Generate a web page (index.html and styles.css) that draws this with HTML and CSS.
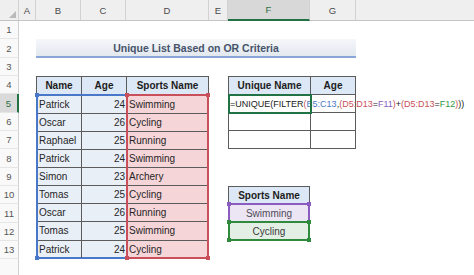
FILE: index.html
```html
<!DOCTYPE html>
<html lang="en">
<head>
    <meta charset="UTF-8">
    <meta name="viewport" content="width=device-width, initial-scale=1.0">
    <title>Unique List Based on OR Criteria</title>
    <link rel="stylesheet" href="styles.css">
</head>
<body>
    <div class="sheet">
        <!-- column headers -->
        <div class="ch corner"><span class="tri"></span></div>
        <div class="ch">A</div>
        <div class="ch">B</div>
        <div class="ch">C</div>
        <div class="ch">D</div>
        <div class="ch">E</div>
        <div class="ch sel">F</div>
        <div class="ch">G</div>
        <div class="ch rest"></div>

        <!-- title -->
        <div class="title">Unique List Based on OR Criteria</div>

        <!-- source list B4:D13 -->
        <div class="list">
            <div class="head">
                <div class="hcell">Name</div>
                <div class="hcell">Age</div>
                <div class="hcell">Sports Name</div>
            </div>
            <div class="list-body">
                <div class="range blue">
                    <i class="hd tl"></i><i class="hd bl"></i>
                    <div class="rrow"><span class="c name">Patrick</span><span class="c num">24</span></div>
                    <div class="rrow"><span class="c name">Oscar</span><span class="c num">26</span></div>
                    <div class="rrow"><span class="c name">Raphael</span><span class="c num">25</span></div>
                    <div class="rrow"><span class="c name">Patrick</span><span class="c num">24</span></div>
                    <div class="rrow"><span class="c name">Simon</span><span class="c num">23</span></div>
                    <div class="rrow"><span class="c name">Tomas</span><span class="c num">25</span></div>
                    <div class="rrow"><span class="c name">Oscar</span><span class="c num">26</span></div>
                    <div class="rrow"><span class="c name">Tomas</span><span class="c num">25</span></div>
                    <div class="rrow"><span class="c name">Patrick</span><span class="c num">24</span></div>
                </div>
                <div class="range red">
                    <i class="hd tl"></i><i class="hd tr"></i><i class="hd bl"></i><i class="hd br"></i>
                    <div class="rrow"><span class="c">Swimming</span></div>
                    <div class="rrow"><span class="c">Cycling</span></div>
                    <div class="rrow"><span class="c">Running</span></div>
                    <div class="rrow"><span class="c">Swimming</span></div>
                    <div class="rrow"><span class="c">Archery</span></div>
                    <div class="rrow"><span class="c">Cycling</span></div>
                    <div class="rrow"><span class="c">Running</span></div>
                    <div class="rrow"><span class="c">Swimming</span></div>
                    <div class="rrow"><span class="c">Cycling</span></div>
                </div>
            </div>
        </div>

        <!-- result F4:G7 -->
        <div class="result">
            <div class="rc hc">Unique Name</div>
            <div class="rc hc">Age</div>
            <div class="rc active"><span class="fx">=UNIQUE(FILTER<span class="p">(</span><span class="ref-b">B5:C13</span>,<span class="p">(</span><span class="ref-d">D5:D13</span>=<span class="ref-f11">F11</span><span class="p">)</span>+<span class="p">(</span><span class="ref-d">D5:D13</span>=<span class="ref-f12">F12</span><span class="p">)</span>))</span></div>
            <div class="rc"></div>
            <div class="rc"></div>
            <div class="rc"></div>
            <div class="rc"></div>
            <div class="rc"></div>
        </div>

        <!-- criteria F10:F12 -->
        <div class="criteria">
            <div class="crit-head">Sports Name</div>
            <div class="crit purple"><span class="ct">Swimming</span><i class="hd tl"></i><i class="hd tr"></i></div>
            <div class="crit green"><span class="ct">Cycling</span><i class="hd tl"></i><i class="hd tr"></i><i class="hd bl"></i><i class="hd br"></i></div>
        </div>

        <!-- row headers -->
        <div class="rh">1</div>
        <div class="rh">2</div>
        <div class="rh">3</div>
        <div class="rh">4</div>
        <div class="rh sel">5</div>
        <div class="rh">6</div>
        <div class="rh">7</div>
        <div class="rh">8</div>
        <div class="rh">9</div>
        <div class="rh">10</div>
        <div class="rh">11</div>
        <div class="rh">12</div>
        <div class="rh">13</div>
        <div class="rh"></div>
    </div>
</body>
</html>
```

FILE: styles.css
```css
* {
    box-sizing: border-box;
}
body {
    margin: 0;
    background: #fff;
    font-family: "Liberation Sans", Arial, sans-serif;
    font-size: 10px;
    color: #222;
}
.sheet {
    display: grid;
    grid-template-columns: 19px 17px 45px 45px 83px 19px 82px 46px 1fr;
    grid-template-rows: 21px repeat(14, 18.35px);
    width: 474px;
    height: 275px;
    overflow: hidden;
}

/* headers */
.ch {
    display: flex;
    align-items: center;
    justify-content: center;
    background: #efefef;
    border-right: 1px solid #d2d2d2;
    border-bottom: 1px solid #c4c4c4;
    color: #4a4a4a;
    font-size: 9.5px;
}
.ch.sel {
    background: #d8d8d8;
    border-bottom: 2px solid #217346;
    color: #2f6f44;
}
.ch.rest {
    border-right: none;
}
.corner {
    align-items: flex-end;
    justify-content: flex-end;
    padding: 0 2px 2px 0;
}
.tri {
    width: 0;
    height: 0;
    border-left: 7px solid transparent;
    border-bottom: 7px solid #b9b9b9;
}
.rh {
    grid-column: 1;
    display: flex;
    align-items: center;
    justify-content: center;
    background: #f9f9f9;
    border-right: 1px solid #cfcfcf;
    border-bottom: 1px solid #e6e6e6;
    color: #555;
    font-size: 9.5px;
}
.rh.sel {
    background: #dadada;
    border-right: 2px solid #217346;
    color: #2f6f44;
}

/* title banner */
.title {
    grid-column: 3 / 9;
    grid-row: 3;
    display: flex;
    align-items: center;
    justify-content: center;
    background: linear-gradient(#f5f7fa, #e3e8ef);
    border-bottom: 2px solid #8aa5d8;
    color: #46536a;
    font-size: 10.5px;
    font-weight: bold;
}

/* source list */
.list {
    grid-column: 3 / 6;
    grid-row: 5 / 15;
    display: flex;
    flex-direction: column;
}
.head {
    display: grid;
    grid-template-columns: 45px 45px 1fr;
    height: 18.35px;
    background: #dce8f5;
    border: 1px solid #5b5b5b;
    border-bottom: none;
}
.hcell {
    display: flex;
    align-items: center;
    justify-content: center;
    font-weight: bold;
    color: #1c1c1c;
    border-right: 1px solid #5b5b5b;
}
.hcell:last-child {
    border-right: none;
}
.list-body {
    flex: 1;
    display: flex;
}
.range {
    position: relative;
    display: flex;
    flex-direction: column;
    border: 2px solid;
}
.range.blue {
    width: 90px;
    border-color: #4a78c8;
    border-right: none;
    background: #e9eff7;
    color: #4a78c8;
}
.range.red {
    flex: 1;
    border-color: #c9505a;
    background: #f6d5d8;
    color: #c9505a;
}
.rrow {
    flex: 1;
    display: flex;
    border-bottom: 1px solid #5b5b5b;
}
.rrow:last-child {
    border-bottom: none;
}
.c {
    display: flex;
    align-items: center;
    padding: 0 1px;
    color: #262626;
}
.c.name {
    width: 44px;
    border-right: 1px solid #5b5b5b;
}
.c.num {
    flex: 1;
    justify-content: flex-end;
}

/* range handles */
.hd {
    position: absolute;
    width: 4px;
    height: 4px;
    background: currentColor;
}
.hd.tl { top: -3px; left: -3px; }
.hd.tr { top: -3px; right: -3px; }
.hd.bl { bottom: -3px; left: -3px; }
.hd.br { bottom: -3px; right: -3px; }

/* result table */
.result {
    grid-column: 7 / 9;
    grid-row: 5 / 9;
    display: grid;
    grid-template-columns: 82px 1fr;
    grid-template-rows: repeat(4, 1fr);
    border-top: 1px solid #5b5b5b;
    border-left: 1px solid #5b5b5b;
}
.rc {
    display: flex;
    align-items: center;
    border-right: 1px solid #5b5b5b;
    border-bottom: 1px solid #5b5b5b;
}
.rc.hc {
    justify-content: center;
    background: #dce8f5;
    font-weight: bold;
    color: #1c1c1c;
}
.rc.active {
    position: relative;
    z-index: 1;
    outline: 2px solid #217346;
    outline-offset: -1px;
    white-space: nowrap;
    padding-left: 1px;
}
.fx {
    font-size: 9px;
    color: #222;
}
.fx .p { color: #c9505a; }
.ref-b { color: #4a78c8; }
.ref-d { color: #c9505a; }
.ref-f11 { color: #8a5cc0; }
.ref-f12 { color: #2f9a44; }

/* criteria */
.criteria {
    grid-column: 7;
    grid-row: 11 / 14;
    display: flex;
    flex-direction: column;
}
.crit-head {
    flex: 1;
    display: flex;
    align-items: center;
    justify-content: center;
    background: #dce8f5;
    border: 1px solid #5b5b5b;
    border-bottom: none;
    font-weight: bold;
    color: #1c1c1c;
}
.crit {
    position: relative;
    flex: 1;
    display: flex;
    align-items: center;
    justify-content: center;
    border: 2px solid;
}
.crit.purple {
    border-color: #8a5cc0;
    border-bottom: none;
    background: #ece6f4;
    color: #8a5cc0;
}
.crit.green {
    border-color: #2f8a3e;
    background: #e3efe4;
    color: #2f8a3e;
}
.ct {
    color: #3a3a3a;
}
.crit.purple .ct {
    color: #4e4a58;
}
```
